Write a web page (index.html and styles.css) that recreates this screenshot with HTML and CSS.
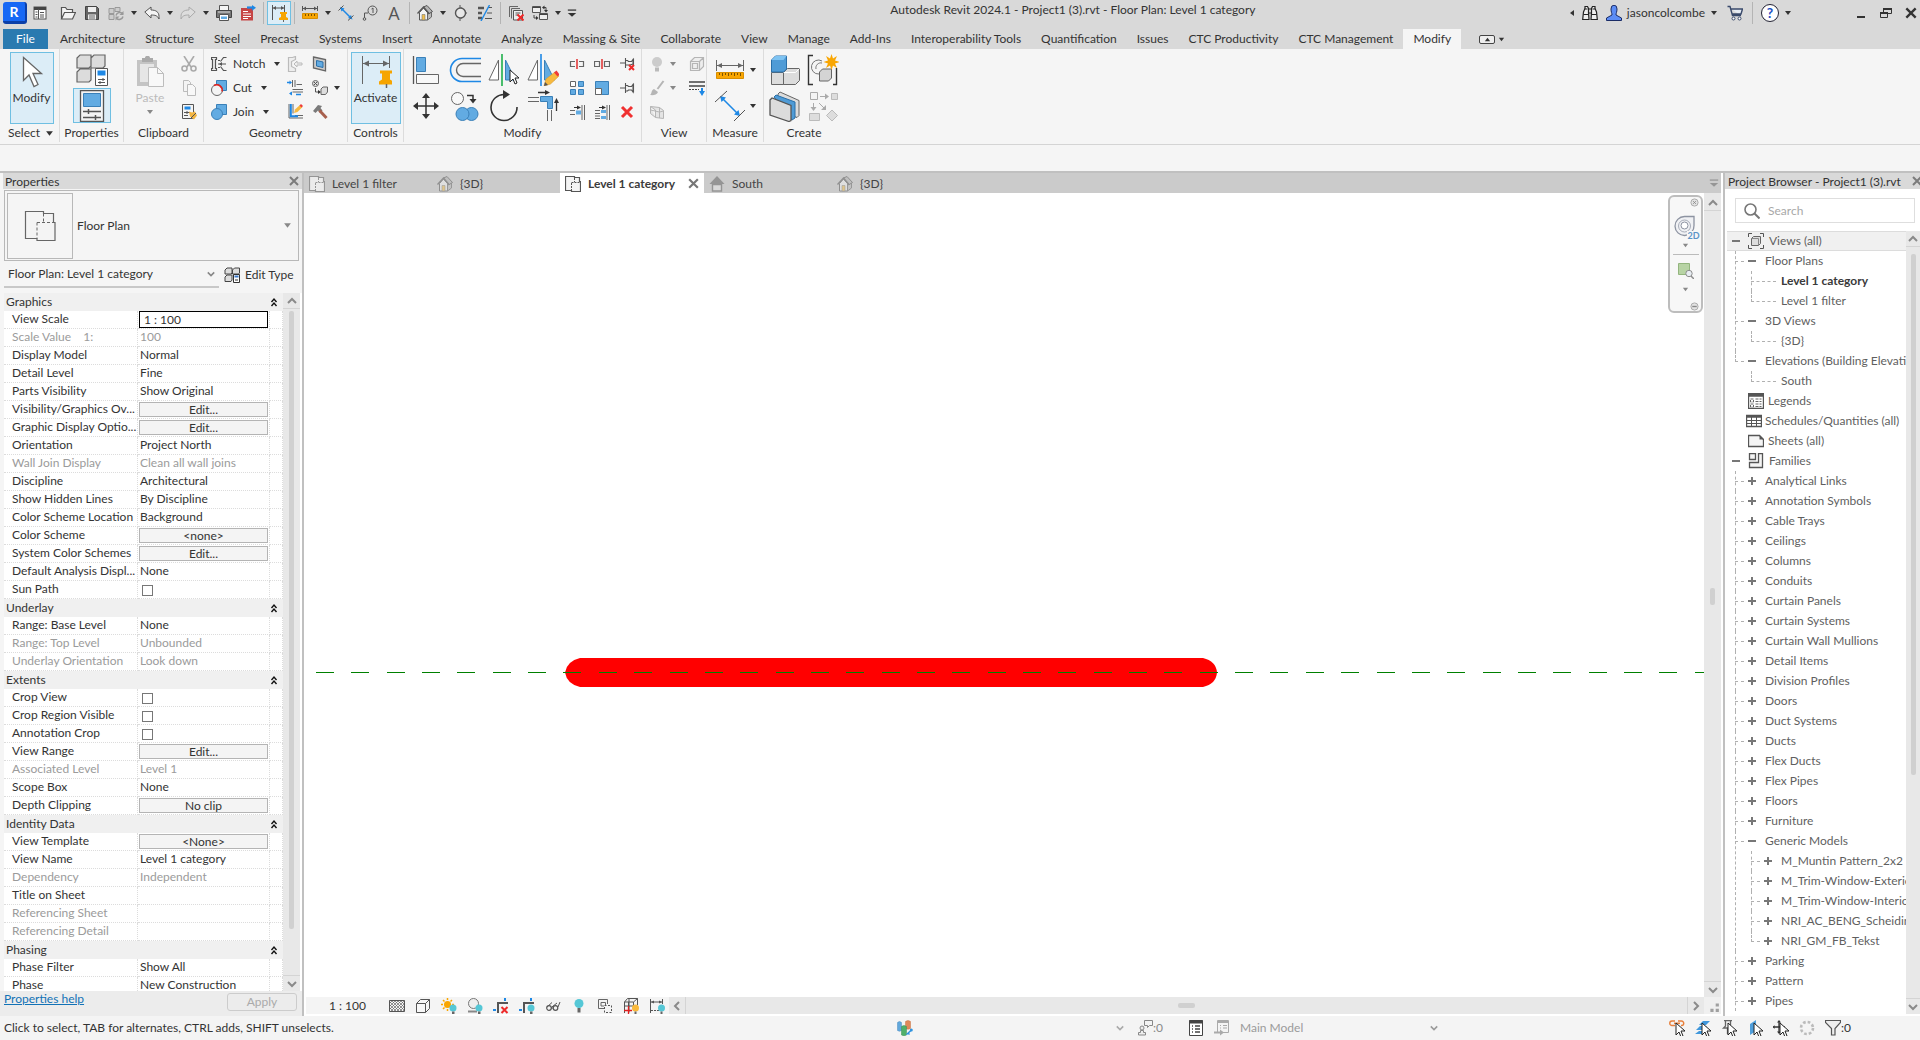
FILE: index.html
```html
<!DOCTYPE html>
<html lang="en">
<head>
<meta charset="utf-8">
<title>Autodesk Revit 2024.1 - Project1 (3).rvt - Floor Plan: Level 1 category</title>
<link rel="stylesheet" href="styles.css">
</head>
<body>
<svg class="sprite" aria-hidden="true">
  <defs>
    <g id="cursor"><path d="M0 0v12l3-3 2 5 2-1-2-5h4z" fill="#fff" stroke="#222" stroke-width="1"/></g>
  </defs>
  <symbol id="caret" viewBox="0 0 8 8"><path d="M1 2h6L4 6z" fill="currentColor"/></symbol>
  <symbol id="chev" viewBox="0 0 10 10"><path d="M1 3l4 4 4-4" fill="none" stroke="currentColor" stroke-width="2"/></symbol>
  <symbol id="close" viewBox="0 0 12 12"><path d="M2 2l8 8M10 2l-8 8" fill="none" stroke="currentColor" stroke-width="2"/></symbol>
  <symbol id="bardown" viewBox="0 0 12 12"><path d="M1 2.500h10" stroke="currentColor" stroke-width="1.500"/><path d="M1 6h10L6 10.500z" fill="currentColor"/></symbol>
  <symbol id="home-tab" viewBox="0 0 16 16"><rect x="2" y="2" width="12" height="12" fill="#fff" stroke="#555"/><path d="M2 3.500h12" stroke="#444" stroke-width="3"/><path d="M6.500 4v10M3.500 7h2M3.500 9.500h2M3.500 12h2M8 7.500h4M8 10h4M8 12h4" stroke="#555" fill="none"/></symbol>
  <symbol id="open" viewBox="0 0 16 16"><path d="M1.500 14V2.500h4l1.500 2h5.500v3M1.500 14l3-6.500h11L12.500 14z" fill="#f4f4f4" stroke="#555" stroke-width="1.200"/></symbol>
  <symbol id="save" viewBox="0 0 16 16"><path d="M1.500 1.500h11l2 2v11h-13z" fill="#666" stroke="#444"/><path d="M4 2h8v5H4zM4 9.500h8v5H4z" fill="#eee"/><path d="M5 11h6M5 13h6" stroke="#666"/></symbol>
  <symbol id="sync" viewBox="0 0 16 16"><path d="M1 3.500h5v5H1zM7 2.500h5v4H7zM1 9.500h5v5H1z" fill="#ccc" stroke="#999"/><path d="M8 10.500a4 4 0 0 1 7-1.500M15 11.500a4 4 0 0 1-6.500 2" fill="none" stroke="#999" stroke-width="1.500"/><path d="M15.500 6v4h-4zM7.500 15.500v-4h4z" fill="#999"/></symbol>
  <symbol id="undo" viewBox="0 0 16 16"><path d="M.800 7L7 2v3c5 0 8 2 8 6.500V14c-1.500-3.500-4-4-8-4v3z" fill="#f4f4f4" stroke="#555"/></symbol>
  <symbol id="redo" viewBox="0 0 16 16"><path d="M15.200 7L9 2v3c-5 0-8 2-8 6.500V14c1.500-3.500 4-4 8-4v3z" fill="#ddd" stroke="#aaa"/></symbol>
  <symbol id="print" viewBox="0 0 16 16"><path d="M3.500.500h9v5h-9z" fill="#f4f4f4" stroke="#555"/><path d="M.500 5.500h15v7H.500z" fill="#777" stroke="#444"/><path d="M2 7h12" stroke="#ddd"/><path d="M3.500 9.500h9v6h-9z" fill="#fff" stroke="#555"/><path d="M5 11.500h6v2.500H5z" fill="#62abe2"/></symbol>
  <symbol id="export" viewBox="0 0 16 16"><path d="M1 3h12v12.500H1z" fill="#c64545"/><path d="M3 6.500h5M3 9h8M3 11.500h8M3 13.500h5" stroke="#fff"/><path d="M7 2.500h6" stroke="#1e88e5" stroke-width="2.200"/><path d="M12 0l4 2.800-4 3z" fill="#1e88e5"/></symbol>
  <symbol id="dimpin16" viewBox="0 0 18 18"><path d="M2.500 1v15M14.500 1v7M3 4h11" stroke="#555" fill="none"/><path d="M3 4l3-2v4zM14 4l-3-2v4z" fill="#555"/><path d="M10 8h7v2h-1v3l2 1v2h-9v-2l2-1v-3h-1z" fill="#f6a500"/><path d="M13.500 16v2" stroke="#666"/></symbol>
  <symbol id="ruler16" viewBox="0 0 16 16"><path d="M.500 1v5M15.500 1v5M1 3.500h14" stroke="#555" fill="none"/><path d="M1 3.500l3-2v4zM15 3.500l-3-2v4z" fill="#555"/><path d="M.500 8.500h15v5H.500z" fill="#f9a602" stroke="#d98f00"/><path d="M3.500 9v2M6.500 9v2M9.500 9v2M12.500 9v2" stroke="#7a5200"/></symbol>
  <symbol id="dim16" viewBox="0 0 16 16"><path d="M4 4l8.500 8.500" stroke="#1e88e5" stroke-width="1.500"/><path d="M2 2l4.500 1.500L3.500 6.500zM14.500 14.500L10 13l3-3z" fill="#1e88e5"/><path d="M.500 5.500l5-5M10 15.500l5.500-5" stroke="#555"/></symbol>
  <symbol id="tag" viewBox="0 0 16 16"><circle cx="10.500" cy="5.500" r="4.500" fill="none" stroke="#555"/><path d="M9.500 4l1.500-1v5M6 8H2.500v5" fill="none" stroke="#555"/><circle cx="2.500" cy="14" r="1.300" fill="none" stroke="#555"/></symbol>
  <symbol id="house" viewBox="0 0 16 16"><path d="M2.500 7.500v7.500h8V7.500L6.500 3z" fill="#f4f4f4" stroke="#555"/><path d="M10.500 15l4-3V6.500L10.500 8z" fill="#bbb" stroke="#666"/><path d="M6.500 2L10 .500 15.500 6.500 11.500 9z" fill="#b4b4b4" stroke="#555"/><path d="M.500 8.500l6-6.500 5.500 6.500" fill="none" stroke="#555" stroke-width="1.300"/><path d="M5 9.500h3V15H5z" fill="#f3c04c" stroke="#777" stroke-width=".6"/></symbol>
  <symbol id="section" viewBox="0 0 16 16"><path d="M7 0v16" stroke="#555"/><path d="M8 2l6 6-6 6z" fill="#555"/><circle cx="7.500" cy="8" r="5" fill="#e8e8e8" stroke="#555" stroke-width="1.400"/></symbol>
  <symbol id="thin" viewBox="0 0 16 16"><path d="M1 3h6M1 8h4M1 13h4" stroke="#555" stroke-width="2.600"/><path d="M11 2.500h4M10 8h5M8 13.500h7" stroke="#555"/><path d="M12.500 0L4 16" stroke="#1e88e5" stroke-width="1.400"/></symbol>
  <symbol id="closeviews" viewBox="0 0 16 16"><path d="M1.500 12V1.500H10M3.500 13.500v-10H12" fill="none" stroke="#666"/><path d="M5.500 5.500h9V15h-9z" fill="#eee" stroke="#555"/><path d="M7.500 8h5M7.500 10h3" stroke="#555"/><path d="M9.500 9.500l6 6M15.500 9.500l-6 6" stroke="#ee2a2a" stroke-width="2"/></symbol>
  <symbol id="switch" viewBox="0 0 16 16"><path d="M.500 1.500h8v6h-8z" fill="#eee" stroke="#555"/><path d="M7.500 8.500h8v6h-8z" fill="#eee" stroke="#555"/><path d="M.500 2.500h8M7.500 9.500h8M11 2.500h3V6M2 10v3h3" fill="none" stroke="#444"/><path d="M10 2.500l2.500-2v4zM12 5h4l-2 2.500zM4 11v4l2.500-2z" fill="#333"/></symbol>
  <symbol id="bino" viewBox="0 0 16 16"><path d="M3 1.500h2.500l1 2V8l.5 6.500H.700L1.500 7 3 3.500zM13 1.500h-2.500l-1 2V8L9 14.500h6.300L14.500 7 13 3.500z" fill="#eee" stroke="#222" stroke-width="1.200"/><path d="M6.500 4h3v4h-3z" fill="#ccc" stroke="#222"/><path d="M1.500 9.500h5M9.500 9.500h5M2.500 4h3M10.500 4h3" stroke="#222"/></symbol>
  <symbol id="user" viewBox="0 0 16 16"><path d="M5 4a3 3.800 0 0 1 6 0c0 3-1 4-1 6l5.500 3v2.500H.500V13L6 10c0-2-1-3-1-6z" fill="#5d8df5" stroke="#1b2c66"/></symbol>
  <symbol id="cart" viewBox="0 0 16 16"><path d="M.500 1.500h2.500l2.500 9h8.500M4 4h11.500l-1.500 5H5.300" fill="#e6ecf4" stroke="#3a4a6b" stroke-width="1.400"/><circle cx="6.500" cy="13.500" r="1.500" fill="#fff" stroke="#3a4a6b"/><circle cx="12.500" cy="13.500" r="1.500" fill="#fff" stroke="#3a4a6b"/></symbol>
  <symbol id="min" viewBox="0 0 12 12"><path d="M2 10h8" stroke="#333" stroke-width="2"/></symbol>
  <symbol id="restore" viewBox="0 0 12 12"><path d="M3.500 5V1.500h8v5H8" fill="none" stroke="#333"/><path d="M3 2h9" stroke="#333" stroke-width="2"/><path d="M.500 5.500h7v5h-7z" fill="none" stroke="#333"/><path d="M0 6h8" stroke="#333" stroke-width="2"/></symbol>

  <symbol id="modify" viewBox="0 0 32 32"><path d="M7.500 1.500v23l5.500-5.500 5 11.500 4-2-5-11h8.500z" fill="#fff" stroke="#666" stroke-width="1.300"/></symbol>
  <symbol id="props1" viewBox="0 0 32 32"><g fill="#dcdcdc" stroke="#666" stroke-width="1.200"><path d="M1 4l3-3h11v11l-2 2H1zM15 4l3-3h11v11l-2 2H15zM1 18l3-3h11v11l-2 2H1z"/></g><path d="M19.500 14.500h12v17h-12z" fill="#fff" stroke="#555"/><path d="M21.500 16.500h8v5h-8z" fill="#1e88e5"/><path d="M22 25.500h7M22 28.500h7M27 24v3M24 27v3" stroke="#555"/></symbol>
  <symbol id="props2" viewBox="0 0 32 32"><path d="M4.500.500h23v31h-23z" fill="#f4f4f4" stroke="#555" stroke-width="1.300"/><path d="M7.500 3.500h17v13h-17z" fill="#62abe2" stroke="#3a80b8"/><path d="M7 21.500h18M7 27.500h18M12.500 19v5M19.500 25v5" stroke="#555" stroke-width="1.500"/></symbol>
  <symbol id="paste" viewBox="0 0 32 32"><path d="M3 4h20v7h-9v19H3z" fill="#c4c4c4"/><path d="M8 2h3c0-3 5-3 5 0h3v4H8z" fill="#aaa"/><path d="M6 8h14v3h-6v15H6z" fill="#e6e6e6"/><path d="M14.500 11.500h9l6 6v13h-15z" fill="#f8f8f8" stroke="#bdbdbd"/><path d="M23.500 11.500v6h6" fill="none" stroke="#bdbdbd"/></symbol>
  <symbol id="cut" viewBox="0 0 16 16"><path d="M3 0l7 11M13 0L6 11" stroke="#aaa" stroke-width="1.600"/><circle cx="3.500" cy="12.500" r="2.500" fill="none" stroke="#aaa" stroke-width="1.600"/><circle cx="12.500" cy="12.500" r="2.500" fill="none" stroke="#aaa" stroke-width="1.600"/></symbol>
  <symbol id="copy" viewBox="0 0 16 16"><path d="M2.500.500h5l2 2v9h-7z" fill="#f4f4f4" stroke="#bbb"/><path d="M6.500 4.500h5l3 3v8h-8z" fill="#f8f8f8" stroke="#bbb"/></symbol>
  <symbol id="match" viewBox="0 0 16 16"><path d="M1.500.500h11v14h-11z" fill="#f4f4f4" stroke="#555"/><path d="M3.500 2.500h6v3h-6z" fill="#1e88e5"/><path d="M3 8.500h6M3 11.500h4M6 7v3" stroke="#555"/><path d="M8 7.500l3 1 3-1 2 4-3 4-4-3z" fill="#f3b541"/><path d="M10 14l5-5" stroke="#555"/></symbol>
  <symbol id="notch" viewBox="0 0 16 16"><path d="M.500 1.500h5v2h-1v9h1v2h-5v-2h1v-9h-1zM7 4.500h2M7 11.500h2M7 8h8M15.500 1.500h-3l-3 4M15.500 14.500h-3l-3-4" fill="#eee" stroke="#555" stroke-width="1.200"/><path d="M8 8l3-2v4z" fill="#555"/></symbol>
  <symbol id="cutg" viewBox="0 0 16 16"><path d="M5.500.500h10v10h-4a6 6 0 0 0-6-6z" fill="#62abe2" stroke="#3a80b8"/><circle cx="6" cy="10" r="5.500" fill="#f4f4f4" stroke="#666"/><path d="M3 5.500a5.500 5.500 0 0 1 8 6" fill="none" stroke="#e02020" stroke-width="1.500"/></symbol>
  <symbol id="joing" viewBox="0 0 16 16"><path d="M5.500.500h10v10h-10z" fill="#62abe2" stroke="#3a80b8"/><circle cx="6" cy="10" r="5.500" fill="#62abe2" stroke="#3a80b8"/></symbol>
  <symbol id="cope" viewBox="0 0 16 16"><path d="M1.500 1.500h4l3-1v3l-4 2v5l4 2v3h-7z" fill="#eee" stroke="#bbb" stroke-width="1.200"/><path d="M7 8l3-3v2h5v2h-5v2z" fill="#eee" stroke="#bbb"/></symbol>
  <symbol id="opening" viewBox="0 0 16 16"><path d="M1.500 1l12 2.500V15l-12-3z" fill="#ccc" stroke="#666" stroke-width="1.300"/><path d="M4.500 4.500l6.500 1.500v5.500l-6.500-1.500z" fill="#62abe2" stroke="#2a6fa8"/></symbol>
  <symbol id="beam" viewBox="0 0 16 16"><path d="M5.500 0v7M8 0v7M5.500 9.500H16M5.500 12H16" stroke="#666"/><path d="M0 2.500h3M14 14.500H9M3 13.500h2" stroke="#1e88e5" stroke-width="1.300"/><path d="M2.500.500l2.500 2-2.500 2zM5 15.500l-3-2 3-2z" fill="#1e88e5"/><path d="M9.500 4.500H15" stroke="#666"/></symbol>
  <symbol id="split" viewBox="0 0 16 16"><circle cx="3.500" cy="3.500" r="3" fill="#ddd" stroke="#666"/><path d="M2 2l3 3M5 2L2 5M3.500 8v4H7" stroke="#555" fill="none"/><path d="M6 10l3 2-3 2z" fill="#333"/><path d="M9 9l2-2h4.500v5l-2 2.500H9z" fill="#ddd" stroke="#666"/></symbol>
  <symbol id="walljoin" viewBox="0 0 16 16"><path d="M2 0v14h14M6 0v9.500M8 11.500h8" fill="none" stroke="#666"/><path d="M3.800 0v12.200H11" fill="none" stroke="#1e88e5" stroke-width="2"/><path d="M7 9l1-3.500L13 1l2.500 2-5 5z" fill="#f7b93f"/><path d="M12.500 1.500L14 0l2 2-1.500 1.500z" fill="#ee3a3a"/></symbol>
  <symbol id="hammer" viewBox="0 0 16 16"><path d="M1 7l5-6 4 1-1.500 2 2 2.500-2.500 2.500L6 6.500 3.500 9z" fill="#7a7a7a"/><path d="M7.500 6.500l7 7.500" stroke="#a8604d" stroke-width="3"/></symbol>
  <symbol id="activate" viewBox="0 0 32 32"><path d="M2.500 0v28M29.500 0v12M3 7.500h26" stroke="#666" fill="none"/><path d="M3 7.500l6-3v6zM29 7.500l-6-3v6z" fill="#666"/><path d="M20 14.500h12v3h-2v6l3 2v3H19v-3l3-2v-6h-2z" fill="#f6a500"/><path d="M26.500 28v4" stroke="#666" stroke-width="1.500"/></symbol>
  <symbol id="align" viewBox="0 0 32 32"><path d="M3.500 2v28" stroke="#555" stroke-width="1.300"/><path d="M6.500 3.500h9v14h-9z" fill="#62abe2" stroke="#3a80b8"/><path d="M6.500 20.500h22v9h-22z" fill="#f8f8f8" stroke="#666"/></symbol>
  <symbol id="offset" viewBox="0 0 32 32"><path d="M32 4.500H13a11.500 11.500 0 0 0 0 23h19" fill="none" stroke="#1e88e5" stroke-width="1.600"/><path d="M32 9.500H14a6.500 6.500 0 0 0 0 13h18" fill="none" stroke="#666" stroke-width="1.400"/></symbol>
  <symbol id="mirrorp" viewBox="0 0 32 32"><path d="M10.500 6v20H1z" fill="#fff" stroke="#666"/><path d="M14 0v32" stroke="#1fb04b" stroke-width="1.600"/><path d="M17.500 6v20h10z" fill="#62abe2" stroke="#3a80b8"/><use href="#cursor" x="22" y="16"/></symbol>
  <symbol id="mirrord" viewBox="0 0 32 32"><path d="M10.500 6v20H1z" fill="#fff" stroke="#666"/><path d="M14 0v32" stroke="#1e88e5" stroke-width="1.600"/><path d="M17.500 6v20h10z" fill="#62abe2" stroke="#3a80b8"/><path d="M17 32l2-7 9-7 4 4-8.500 8z" fill="#f7b93f" stroke="#d99a2b" stroke-width=".6"/><path d="M27 18.500l2.500-2 3 4-2 2z" fill="#ee3a3a"/><path d="M17 32l1-4 3 3z" fill="#555"/></symbol>
  <symbol id="move" viewBox="0 0 32 32"><path d="M16 5v22M5 16h22" stroke="#333" stroke-width="1.500"/><path d="M12 8l4-5 4 5zM12 24l4 5 4-5zM8 12l-5 4 5 4zM24 12l5 4-5 4z" fill="#333"/></symbol>
  <symbol id="copy32" viewBox="0 0 32 32"><circle cx="8.500" cy="8.500" r="6" fill="#f8f8f8" stroke="#666"/><path d="M18 5.500h6V10" fill="none" stroke="#333" stroke-width="1.500"/><path d="M20.500 9h7L24 13.500z" fill="#333"/><circle cx="22.500" cy="24" r="6.500" fill="#62abe2" stroke="#3a80b8"/><circle cx="13.500" cy="24" r="6.500" fill="#62abe2" stroke="#3a80b8"/></symbol>
  <symbol id="rotate" viewBox="0 0 32 32"><path d="M17 4.500A13 13 0 1 0 29 17" fill="none" stroke="#333" stroke-width="1.600"/><path d="M15 0l7 4.500L15 9z" fill="#333"/></symbol>
  <symbol id="trim" viewBox="0 0 32 32"><path d="M1 7.500h11M1 11.500h11M20.500 20v11M24.500 20v11" stroke="#666"/><path d="M13.500 6.500h12v12h-5v-7h-7z" fill="#62abe2" stroke="#3a80b8"/><path d="M11 2.500h8M29.500 21v-9" stroke="#333" stroke-width="1.300"/><path d="M18 0l5 2.500L18 5zM27 13l2.500-5 2.500 5z" fill="#333"/></symbol>
  <symbol id="splitel" viewBox="0 0 16 16"><path d="M6 5.500H1.500v5H6M10 5.500h4.500v5H10" fill="none" stroke="#666" stroke-width="1.200"/><path d="M8 3v10" stroke="#e02020" stroke-width="1.400"/></symbol>
  <symbol id="splitgap" viewBox="0 0 16 16"><path d="M.500 5.500h5v5h-5zM10.500 5.500h5v5h-5z" fill="none" stroke="#666" stroke-width="1.200"/><path d="M8 3v10" stroke="#e02020" stroke-width="1.400"/></symbol>
  <symbol id="pin" viewBox="0 0 16 16"><path d="M1 8h5M6.500 3v10M6.500 5.500h2l1 1h3l1.500-2v7.500l-1.500-2h-3l-1 1h-2M14.500 3.500v9" fill="none" stroke="#555" stroke-width="1.100"/></symbol>
  <symbol id="unpin" viewBox="0 0 16 16"><path d="M1 7h5M6.500 2v10M6.500 4.500h2l1 1h3l1.500-2V8l-3 1h-4M14.500 2.500v7" fill="none" stroke="#555" stroke-width="1.100"/><path d="M10 9l5 5M15 9l-5 5" stroke="#ee2a2a" stroke-width="2"/></symbol>
  <symbol id="array" viewBox="0 0 16 16"><path d="M1.500 1.500h5v5h-5z" fill="#fff" stroke="#666"/><path d="M9.500 1.500h5v5h-5zM1.500 9.500h5v5h-5zM9.500 9.500h5v5h-5z" fill="#62abe2" stroke="#3a80b8"/></symbol>
  <symbol id="scale" viewBox="0 0 16 16"><path d="M1.500 1.500h13v13h-13z" fill="#62abe2" stroke="#3a80b8"/><path d="M1.500 8.500h6v6h-6z" fill="#fff" stroke="#666"/></symbol>
  <symbol id="trim1" viewBox="0 0 16 16"><path d="M1 6.500h5M1 10.500h5M13 1v15M15.500 1v15" stroke="#666"/><path d="M7 6.500h5v4H7z" fill="#62abe2"/><path d="M5 3.500h4" stroke="#333"/><path d="M8 1.500l4 2-4 2z" fill="#333"/></symbol>
  <symbol id="trimm" viewBox="0 0 16 16"><path d="M1 6.500h5M1 9.500h5M1 12h5M1 14.500h5M13 1v15M15.500 1v15" stroke="#666"/><path d="M7 6h5v3H7zM7 12h5v3H7z" fill="#62abe2"/><path d="M5 3.500h4" stroke="#333"/><path d="M8 1.500l4 2-4 2z" fill="#333"/></symbol>
  <symbol id="delete" viewBox="0 0 16 16"><path d="M3 3l10 10M13 3L3 13" stroke="#f03030" stroke-width="3"/></symbol>
  <symbol id="bulbg" viewBox="0 0 16 16"><circle cx="8" cy="6" r="5" fill="#ccc"/><path d="M6 11.500h4v4H6z" fill="#bbb"/></symbol>
  <symbol id="boxg" viewBox="0 0 16 16"><path d="M1.500 5.500l4-4h9v9l-4 4h-9zM1.500 5.500h9v9M10.500 5.500l4-4M3.500 7.500h5v5h-5z" fill="#eee" stroke="#b5b5b5" stroke-width="1.200"/></symbol>
  <symbol id="brush" viewBox="0 0 16 16"><path d="M14.500 1l-6 8" stroke="#b5b5b5" stroke-width="2"/><path d="M1 15c2-1 1-5 4-6l4 3c-1 3-5 3.500-8 3z" fill="#b5b5b5"/></symbol>
  <symbol id="linework" viewBox="0 0 16 16"><path d="M0 2h16M0 6h16" stroke="#444" stroke-width="1.600"/><path d="M0 9.500h10" stroke="#444" stroke-dasharray="2 1"/><path d="M13 8v4" stroke="#1e88e5" stroke-width="2"/><path d="M10 11h6l-3 5z" fill="#1e88e5"/></symbol>
  <symbol id="wireg" viewBox="0 0 16 16"><path d="M1.500 2.500l9 1 4 3v8l-8-1-5-4zM1.500 6l9 2 4-1M6.500 13.500V6l-5-3.500M10.500 3.500V14" fill="#e4e4e4" stroke="#b5b5b5"/></symbol>
  <symbol id="measure" viewBox="0 0 32 32"><path d="M2.500 6v11M29.500 6v11M3 11.500h26" stroke="#666" fill="none"/><path d="M3 11.500l5-2.500v5zM29 11.500l-5-2.500v5z" fill="#666"/><path d="M2.500 18.500h27v6h-27z" fill="#f9a602" stroke="#d98f00"/><path d="M5.500 19v2M8.500 19v3M11.500 19v2M14.500 19v3M17.500 19v2M20.500 19v3M23.500 19v2M26.500 19v3" stroke="#7a5200"/></symbol>
  <symbol id="dim32" viewBox="0 0 32 32"><path d="M8 8l16 16" stroke="#1e88e5" stroke-width="1.600"/><path d="M6 6l6 1.500L7.500 12zM26 26l-6-1.500 4.500-4.500z" fill="#1e88e5"/><path d="M1 12L13 1M20 31l11-11" stroke="#555"/></symbol>
  <symbol id="assembly" viewBox="0 0 32 32"><path d="M2.500 18.500h12v12h-12zM14.500 18.500l4-4h12v12l-4 4h-12z" fill="#dcdcdc" stroke="#666"/><path d="M26.500 18.500l4-4M14.500 18.500h12" stroke="#fff"/><path d="M2.500 6l4-4h11v13l-3 3h-12z" fill="#4f9bd6" stroke="#2a6fa8"/><path d="M2.500 6l4-4h11l-3 4z" fill="#7ec3f2"/></symbol>
  <symbol id="group" viewBox="0 0 32 32"><path d="M6 1.500H1.500v29H6M26 30.500h3.500V14" fill="none" stroke="#333" stroke-width="1.400"/><path d="M15 7a7 7 0 1 0-3 13M15 9a5 5 0 0 0-6 6" fill="none" stroke="#777"/><path d="M12.500 18l3-3h9v9l-3 3h-9z" fill="#d4d4d4" stroke="#666"/><path d="M24.500 0l1.500 4.500 4-2.500-2 4.500 4.500 1.500-4.500 1.500 2 4.500-4-2.500-1.500 4.500-1.500-4.500-4 2.500 2-4.500-4.500-1.500L21 6.500 19 2l4 2.500z" fill="#f9a602"/></symbol>
  <symbol id="parts" viewBox="0 0 32 32"><path d="M9 4l2-2 19 8.500v15l-2 2L9 20z" fill="#dcdcdc" stroke="#666"/><path d="M5 7l2-2 19 7v16l-3 2z" fill="#4f9bd6" stroke="#2a6fa8"/><path d="M1 10l2-2 19 7.500v15l-2 1L1 25z" fill="#dcdcdc" stroke="#555" stroke-width="1.300"/></symbol>
  <symbol id="similar" viewBox="0 0 32 32"><path d="M3.500 2.500h7v7h-7z" fill="#f4f4f4" stroke="#aaa"/><path d="M24.500 3.500h6v6h-6zM2.500 23.500h10v7h-10zM25 20l5.500 5.500L25 31l-5.500-5.500z" fill="#ddd" stroke="#bbb"/><path d="M13 6.500h6M6.500 13v5M12 13l5 5" stroke="#aaa" fill="none"/><path d="M18 3.500l4 3-4 3zM3.500 17h6l-3 4zM19 15v5h-5z" fill="#aaa"/></symbol>

  <symbol id="plan" viewBox="0 0 32 32"><path d="M1.500 1.500h18v2h10v9h1.500v18H13v-2H1.500z" fill="#f4f4f4" stroke="currentColor" stroke-width="1.200"/><path d="M19.500 3.500v9M13 12.500h17M13 12.500v16" stroke="currentColor" stroke-dasharray="3 2" fill="none"/></symbol>
  <symbol id="plan16" viewBox="0 0 16 16"><path d="M.500.500h9v1h5v4h1v10h-9v-1h-6z" fill="#f4f4f4" stroke="currentColor" stroke-width="1.200"/><path d="M9.500 2v4M6.500 6.500h8M6.500 7v7" stroke="currentColor" stroke-dasharray="2 1" fill="none"/></symbol>
  <symbol id="elev" viewBox="0 0 16 16"><path d="M8 0l7.500 8H.500z" fill="#888"/><path d="M3.500 8.500h9v6.500h-9z" fill="#ddd" stroke="#888" stroke-width="1.400"/></symbol>
  <symbol id="edittype" viewBox="0 0 16 16"><path d="M1 3l2-2h5v5L7 7H1zM8.500 3l2-2h5v5l-1 1h-6zM1 10l2-2h5v5l-1 1.500H1z" fill="#ddd" stroke="#444"/><path d="M9.500 7.500h6v8h-6z" fill="#fff" stroke="#333"/><path d="M10.500 8.500h4v2h-4z" fill="#3a78c8"/><path d="M11 13h3" stroke="#333"/></symbol>
  <symbol id="dblup" viewBox="0 0 8 10"><path d="M1.500 5L4 2l2.500 3M1.500 9L4 6l2.500 3" fill="none" stroke="#111" stroke-width="1.400"/></symbol>
  <symbol id="search" viewBox="0 0 16 16"><circle cx="6.500" cy="6.500" r="5.500" fill="none" stroke="#777" stroke-width="1.600"/><path d="M10.500 10.500l5 5" stroke="#777" stroke-width="2"/></symbol>
  <symbol id="views" viewBox="0 0 16 16"><path d="M.500 4V.500H4M12 .500h3.500V4M.500 12v3.500H4M12 15.500h3.500V12" fill="none" stroke="#555"/><path d="M3.500 5.500l2-2h7v7l-2 2h-7z" fill="#ddd" stroke="#666"/><path d="M3.500 5.500h7v7" fill="none" stroke="#888"/></symbol>
  <symbol id="legend" viewBox="0 0 16 16"><path d="M.500.500h15v15H.500z" fill="#fff" stroke="#555" stroke-width="1.400"/><path d="M0 2h16" stroke="#555" stroke-width="3.500"/><path d="M2.500 6h3v3h-3zM2.500 11h3v3h-3zM7.500 6h6M7.500 8.500h6M7.500 11h6M7.500 13.500h6" fill="none" stroke="#666" stroke-dasharray="3 1"/></symbol>
  <symbol id="schedule" viewBox="0 0 16 16"><path d="M.500 2.500h15v11H.500z" fill="#fff" stroke="#555" stroke-width="1.400"/><path d="M0 3.500h16" stroke="#555" stroke-width="2.500"/><path d="M1 7.500h14M1 10.500h14M5.500 4v9M10.500 4v9" stroke="#555"/></symbol>
  <symbol id="sheet" viewBox="0 0 16 16"><path d="M.500 2.500h11l4 4v7H.500z" fill="#f4f4f4" stroke="#555" stroke-width="1.300"/><path d="M11.500 2.500v4h4z" fill="#555"/></symbol>
  <symbol id="families" viewBox="0 0 16 16"><path d="M1.500.500h6v6h-6zM10.500.500h4v14h-13v-5h9z" fill="#f4f4f4" stroke="#555" stroke-width="1.300"/></symbol>

  <symbol id="v-fine" viewBox="0 0 16 16"><pattern id="hatch" width="3" height="3" patternUnits="userSpaceOnUse"><path d="M0 0l3 3M3 0L0 3" stroke="#666" stroke-width=".7"/></pattern><path d="M.500 2.500h15v11H.500z" fill="url(#hatch)" stroke="#555"/></symbol>
  <symbol id="v-style" viewBox="0 0 16 16"><path d="M1.500 5.500l4-4h9v9l-4 4h-9zM1.500 5.500h9v9M10.500 5.500l4-4" fill="#f8f8f8" stroke="#555"/></symbol>
  <symbol id="v-sun" viewBox="0 0 16 16"><circle cx="6.500" cy="6.500" r="3.500" fill="#f9a602"/><path d="M6.500 0v2M6.500 11v2M0 6.500h2M11 6.500h2M2 2l1.500 1.500M11 2L9.500 3.500M2 11l1.500-1.500" stroke="#f9a602" stroke-width="1.500"/><circle cx="12" cy="10" r="3.500" fill="#55c7d6"/><path d="M11 13.500h2.500V16H11z" fill="#666"/></symbol>
  <symbol id="v-shadow" viewBox="0 0 16 16"><circle cx="6.500" cy="5.500" r="5" fill="#eee" stroke="#777"/><path d="M1 13.500h9" stroke="#888" stroke-width="2"/><circle cx="12" cy="10" r="3.500" fill="#55c7d6"/><path d="M11 13.500h2.500V16H11z" fill="#666"/></symbol>
  <symbol id="v-crop" viewBox="0 0 16 16"><path d="M5 15V5h10" fill="none" stroke="#555" stroke-width="2"/><path d="M12 0v3M0 12h3" stroke="#1e88e5" stroke-width="2"/><path d="M8.500 9l6 6M14.500 9l-6 6" stroke="#ee2a2a" stroke-width="2"/></symbol>
  <symbol id="v-cropr" viewBox="0 0 16 16"><path d="M5 15V5h10" fill="none" stroke="#555" stroke-width="2"/><path d="M12 0v3M0 12h3" stroke="#1e88e5" stroke-width="2"/><circle cx="12" cy="10" r="3.500" fill="#55c7d6"/><path d="M11 13.500h2.500V16H11z" fill="#666"/></symbol>
  <symbol id="v-glasses" viewBox="0 0 16 16"><circle cx="4" cy="10" r="2.300" fill="none" stroke="#555" stroke-width="1.200"/><circle cx="10.500" cy="10" r="2.300" fill="none" stroke="#555" stroke-width="1.200"/><path d="M2 9l5-4.500M6.300 9.500L12 5M13 9l2-5M6 10h2" stroke="#555" fill="none"/></symbol>
  <symbol id="v-bulb" viewBox="0 0 16 16"><circle cx="8" cy="5.500" r="4.500" fill="#55c7d6"/><path d="M6.500 10h3v4.500h-3z" fill="#666"/></symbol>
  <symbol id="v-temp" viewBox="0 0 16 16"><path d="M7 10.500H1.500v-9h9V6M4 4.500h4.500V7M4 4.500V8h3" fill="none" stroke="#666"/><path d="M7.500 7.500h7v7h-7z" fill="none" stroke="#555" stroke-dasharray="2 1.500"/></symbol>
  <symbol id="v-analytic" viewBox="0 0 16 16"><path d="M1.500 15V4l3-3.500h10V7M1.500 4h9l4-3.500M5.500 4v11M10.500 4v6M6 .500v14M1.500 8h13" fill="none" stroke="#555"/><path d="M1 12.500h8M5.500 8v8" stroke="#e02020" stroke-width="1.300"/><circle cx="12.500" cy="10" r="3.500" fill="#f9b93c"/><path d="M11.500 13.500h2V16h-2z" fill="#666"/></symbol>
  <symbol id="v-constraint" viewBox="0 0 16 16"><path d="M1.500 1v14M13.500 1v5M2 4h11" fill="none" stroke="#555"/><path d="M2 12.500h8" stroke="#555" stroke-dasharray="2 1"/><path d="M2 4l3-1.500v3zM13 4l-3-1.500v3z" fill="#555"/><circle cx="12.500" cy="10" r="3.500" fill="#55c7d6"/><path d="M11.500 13.500h2V16h-2z" fill="#666"/></symbol>
  <symbol id="grip" viewBox="0 0 16 16"><path d="M11 6h3v3h-3zM11 11h3v3h-3zM6 11h3v3H6z" fill="#a0a0a0"/></symbol>
  <symbol id="wheel" viewBox="0 0 24 24"><path d="M10.500 1.500H20v9a9.500 9.500 0 1 1-9.500-9z" fill="#f0f1f4" stroke="#8d93a1" stroke-width="1.300"/><circle cx="10.500" cy="11" r="6" fill="none" stroke="#a7acb8"/><circle cx="10.500" cy="10.500" r="3.500" fill="#fff" stroke="#8d93a1"/></symbol>
  <symbol id="zoomr" viewBox="0 0 16 16"><path d="M.500.500h11v11H.500z" fill="#b7d3a4" stroke="#93b57e"/><circle cx="11" cy="10.500" r="3.200" fill="#e8edf2" stroke="#8c8c8c"/><path d="M13 13l3 3" stroke="#8c8c8c" stroke-width="1.500"/></symbol>
  <symbol id="ncx" viewBox="0 0 10 10"><circle cx="5" cy="5" r="4" fill="#e3e3e3" stroke="#a5a5a5"/><path d="M3.500 3.500l3 3M6.500 3.500l-3 3" stroke="#888"/></symbol>
  <symbol id="ncm" viewBox="0 0 10 10"><circle cx="5" cy="5" r="4" fill="#e3e3e3" stroke="#a5a5a5"/><path d="M2.500 5h5" stroke="#888" stroke-width="1.500"/></symbol>

  <symbol id="workset" viewBox="0 0 16 16"><path d="M.500 2.500q2-2 4 0v8q-2 1.500-4 0z" fill="#62a8dc" stroke="#4a8cc0" stroke-width=".5"/><path d="M8.500 1.500q2.500-2 5 0v7q-2.500 1.500-5 0z" fill="#e0895a" stroke="#c87445" stroke-width=".5"/><path d="M4.500 6.500q2.500-2 5 0v8.500q-2.500 1.500-5 0z" fill="#4fb06a" stroke="#3a8f53" stroke-width=".5"/><path d="M9.500 14.500l5-4.500M11 13l1.500 1.500" stroke="#2f93e0" stroke-width="1.500"/><circle cx="14.300" cy="10" r="1.500" fill="#2f93e0"/></symbol>
  <symbol id="s-req" viewBox="0 0 16 16"><path d="M7.500.500h8v5h-3l-2 2v-2h-3z" fill="#f4f4f4" stroke="#888"/><circle cx="5" cy="8" r="2" fill="#eee" stroke="#888"/><path d="M3.500 10.500h3v2h2v2.500h-7v-2.500h2z" fill="#eee" stroke="#888"/></symbol>
  <symbol id="s-opt" viewBox="0 0 16 16"><path d="M1.500.500h13v15h-13z" fill="#fff" stroke="#444"/><path d="M1 2h14" stroke="#444" stroke-width="3"/><path d="M4 6h1M7 6h5M4 9h1M7 9h5M4 12h1M7 12h5" stroke="#444" stroke-width="1.300"/></symbol>
  <symbol id="s-add" viewBox="0 0 16 16"><path d="M3.500.500h11v12h-11z" fill="#f4f4f4" stroke="#aaa"/><path d="M3 2h12" stroke="#aaa" stroke-width="2"/><path d="M6 5.500h1M9 5.500h4M6 8h1M9 8h4" stroke="#aaa"/><path d="M0 11.500h6v-2l4 3-4 3v-2H0z" fill="#aaa"/></symbol>
  <symbol id="s-link" viewBox="0 0 16 16"><path d="M6 5.500H3a2.200 2.200 0 0 1 0-4.500h3M9 1h3.500a2.200 2.200 0 0 1 0 4.500H12M5 3.200h6" fill="none" stroke="#e8803c" stroke-width="1.400"/><use href="#cursor" x="7" y="3"/></symbol>
  <symbol id="s-under" viewBox="0 0 16 16"><path d="M4 5l4-4h7l-4 4zM1 10l4-4h7l-4 4zM0 14l4-3h6l-3 3z" fill="#3f97dc"/><use href="#cursor" x="7" y="3"/></symbol>
  <symbol id="s-pin" viewBox="0 0 16 16"><path d="M3 .500h8M4.500 1v5L2.500 8h8M9.500 1v4M6.500 8v6" fill="none" stroke="#666" stroke-width="1.300"/><use href="#cursor" x="7" y="3"/></symbol>
  <symbol id="s-face" viewBox="0 0 16 16"><path d="M3 4l6-4v11l-6 4z" fill="#4f9fdc"/><use href="#cursor" x="7" y="3"/></symbol>
  <symbol id="s-drag" viewBox="0 0 16 16"><path d="M6 1v12M0 7h12" stroke="#333" stroke-width="1.300"/><path d="M4 2.500L6 0l2 2.500zM4 11.500L6 14l2-2.500zM1.500 5L0 7l1.500 2z" fill="#333"/><use href="#cursor" x="7" y="3"/></symbol>
  <symbol id="s-spin" viewBox="0 0 16 16"><circle cx="8" cy="8" r="6" fill="none" stroke="#bbb" stroke-width="2.600" stroke-dasharray="2.700 2"/></symbol>
  <symbol id="s-filter" viewBox="0 0 16 16"><path d="M.500.500h15v2L10 8.500V15H6.500V8.500L.500 2.500z" fill="#eee" stroke="#555" stroke-width="1.200"/></symbol>
</svg>

<div class="app">
  <header class="titlebar">
    <div class="qat">
      <button class="logo" aria-label="Application menu">R</button>
      <button class="qb first" aria-label="Home"><svg><use href="#home-tab"/></svg></button>
      <button class="qb" aria-label="Open"><svg><use href="#open"/></svg></button>
      <button class="qb" aria-label="Save"><svg><use href="#save"/></svg></button>
      <button class="qb" aria-label="Synchronize"><svg><use href="#sync"/></svg></button>
      <button class="qd" aria-label="Synchronize options"><svg><use href="#caret"/></svg></button>
      <button class="qb" aria-label="Undo"><svg><use href="#undo"/></svg></button>
      <button class="qd" aria-label="Undo list"><svg><use href="#caret"/></svg></button>
      <button class="qb" aria-label="Redo"><svg><use href="#redo"/></svg></button>
      <button class="qd" aria-label="Redo list"><svg><use href="#caret"/></svg></button>
      <button class="qb" aria-label="Print"><svg><use href="#print"/></svg></button>
      <button class="qb" aria-label="Export PDF"><svg><use href="#export"/></svg></button>
      <span class="qs"></span>
      <button class="qb on" aria-label="Activate controls"><svg><use href="#dimpin16"/></svg></button>
      <span class="qs"></span>
      <button class="qb" aria-label="Measure"><svg><use href="#ruler16"/></svg></button>
      <button class="qd" aria-label="Measure options"><svg><use href="#caret"/></svg></button>
      <button class="qb" aria-label="Aligned dimension"><svg><use href="#dim16"/></svg></button>
      <button class="qb" aria-label="Tag by category"><svg><use href="#tag"/></svg></button>
      <button class="qb letter" aria-label="Text">A</button>
      <span class="qs"></span>
      <button class="qb" aria-label="Default 3D view"><svg><use href="#house"/></svg></button>
      <button class="qd" aria-label="3D view options"><svg><use href="#caret"/></svg></button>
      <button class="qb" aria-label="Section"><svg><use href="#section"/></svg></button>
      <button class="qb" aria-label="Thin lines"><svg><use href="#thin"/></svg></button>
      <span class="qs"></span>
      <button class="qb" aria-label="Close inactive views"><svg><use href="#closeviews"/></svg></button>
      <button class="qb" aria-label="Switch windows"><svg><use href="#switch"/></svg></button>
      <button class="qd" aria-label="Window list"><svg><use href="#caret"/></svg></button>
      <button class="qd wide" aria-label="Customize toolbar"><svg><use href="#bardown"/></svg></button>
    </div>
    <h1>Autodesk Revit 2024.1 - Project1 (3).rvt - Floor Plan: Level 1 category</h1>
    <div class="account">
      <button class="qd left" aria-label="Collapse search"><svg><use href="#caret"/></svg></button>
      <button class="qb" aria-label="Search help"><svg><use href="#bino"/></svg></button>
      <button class="user"><svg><use href="#user"/></svg>jasoncolcombe<svg class="c"><use href="#caret"/></svg></button>
      <button class="qb" aria-label="App store"><svg><use href="#cart"/></svg></button>
      <span class="qs"></span>
      <button class="qb help" aria-label="Help"><b>?</b></button>
      <button class="qd" aria-label="Help options"><svg><use href="#caret"/></svg></button>
      <div class="winbtns">
        <button class="wb" aria-label="Minimize"><svg><use href="#min"/></svg></button>
        <button class="wb" aria-label="Restore"><svg><use href="#restore"/></svg></button>
        <button class="wb x" aria-label="Close"><svg><use href="#close"/></svg></button>
      </div>
    </div>
  </header>

  <nav class="tabs">
    <button class="file">File</button>
    <button>Architecture</button><button>Structure</button><button>Steel</button><button>Precast</button><button>Systems</button><button>Insert</button><button>Annotate</button><button>Analyze</button><button>Massing &amp; Site</button><button>Collaborate</button><button>View</button><button>Manage</button><button>Add-Ins</button><button>Interoperability Tools</button><button>Quantification</button><button>Issues</button><button>CTC Productivity</button><button>CTC Management</button><button class="current">Modify</button>
    <button class="ribbonmode" aria-label="Minimize ribbon"><i><svg><use href="#caret"/></svg></i><svg><use href="#caret"/></svg></button>
  </nav>

  <section class="ribbon">
    <div class="panel p-select">
      <div class="body"><button class="big on"><svg><use href="#modify"/></svg><span>Modify</span></button></div>
      <h2>Select <svg><use href="#caret"/></svg></h2>
    </div>
    <div class="panel p-props">
      <div class="body stack">
        <button class="ic" aria-label="Type properties"><svg><use href="#props1"/></svg></button>
        <button class="ic on" aria-label="Properties palette"><svg><use href="#props2"/></svg></button>
      </div>
      <h2>Properties</h2>
    </div>
    <div class="panel p-clip">
      <div class="body">
        <button class="big off"><svg><use href="#paste"/></svg><span>Paste</span><svg class="c"><use href="#caret"/></svg></button>
        <div class="col">
          <button class="sm" aria-label="Cut to clipboard"><svg><use href="#cut"/></svg></button>
          <button class="sm" aria-label="Copy to clipboard"><svg><use href="#copy"/></svg></button>
          <button class="sm" aria-label="Match type"><svg><use href="#match"/></svg></button>
        </div>
      </div>
      <h2>Clipboard</h2>
    </div>
    <div class="panel p-geo">
      <div class="body">
        <div class="col text">
          <button class="smt"><svg><use href="#notch"/></svg>Notch<svg class="c"><use href="#caret"/></svg></button>
          <button class="smt"><svg><use href="#cutg"/></svg>Cut<svg class="c"><use href="#caret"/></svg></button>
          <button class="smt"><svg><use href="#joing"/></svg>Join<svg class="c"><use href="#caret"/></svg></button>
        </div>
        <div class="col">
          <button class="sm" aria-label="Cope"><svg><use href="#cope"/></svg></button>
          <button class="sm" aria-label="Beam joins"><svg><use href="#beam"/></svg></button>
          <button class="sm" aria-label="Wall joins"><svg><use href="#walljoin"/></svg></button>
        </div>
        <div class="col">
          <button class="sm" aria-label="Wall opening"><svg><use href="#opening"/></svg></button>
          <button class="sm" aria-label="Split face"><svg><use href="#split"/></svg><svg class="c"><use href="#caret"/></svg></button>
          <button class="sm" aria-label="Demolish"><svg><use href="#hammer"/></svg></button>
        </div>
      </div>
      <h2>Geometry</h2>
    </div>
    <div class="panel p-ctl">
      <div class="body"><button class="big on"><svg><use href="#activate"/></svg><span>Activate</span></button></div>
      <h2>Controls</h2>
    </div>
    <div class="panel p-mod">
      <div class="body">
        <div class="grid8">
          <button class="ic" aria-label="Align"><svg><use href="#align"/></svg></button>
          <button class="ic" aria-label="Offset"><svg><use href="#offset"/></svg></button>
          <button class="ic" aria-label="Mirror, pick axis"><svg><use href="#mirrorp"/></svg></button>
          <button class="ic" aria-label="Mirror, draw axis"><svg><use href="#mirrord"/></svg></button>
          <button class="ic" aria-label="Move"><svg><use href="#move"/></svg></button>
          <button class="ic" aria-label="Copy"><svg><use href="#copy32"/></svg></button>
          <button class="ic" aria-label="Rotate"><svg><use href="#rotate"/></svg></button>
          <button class="ic" aria-label="Trim to corner"><svg><use href="#trim"/></svg></button>
        </div>
        <div class="col">
          <button class="sm" aria-label="Split element"><svg><use href="#splitel"/></svg></button>
          <button class="sm" aria-label="Array"><svg><use href="#array"/></svg></button>
          <button class="sm" aria-label="Trim single"><svg><use href="#trim1"/></svg></button>
        </div>
        <div class="col">
          <button class="sm" aria-label="Split with gap"><svg><use href="#splitgap"/></svg></button>
          <button class="sm" aria-label="Scale"><svg><use href="#scale"/></svg></button>
          <button class="sm" aria-label="Trim multiple"><svg><use href="#trimm"/></svg></button>
        </div>
        <div class="col">
          <button class="sm" aria-label="Unpin"><svg><use href="#unpin"/></svg></button>
          <button class="sm" aria-label="Pin"><svg><use href="#pin"/></svg></button>
          <button class="sm" aria-label="Delete"><svg><use href="#delete"/></svg></button>
        </div>
      </div>
      <h2>Modify</h2>
    </div>
    <div class="panel p-view">
      <div class="body">
        <div class="col">
          <button class="sm g" aria-label="Hide in view"><svg><use href="#bulbg"/></svg><svg class="c"><use href="#caret"/></svg></button>
          <button class="sm g" aria-label="Override graphics"><svg><use href="#brush"/></svg><svg class="c"><use href="#caret"/></svg></button>
          <button class="sm" aria-label="Selection box"><svg><use href="#wireg"/></svg></button>
        </div>
        <div class="col">
          <button class="sm" aria-label="Displace elements"><svg><use href="#boxg"/></svg></button>
          <button class="sm" aria-label="Linework"><svg><use href="#linework"/></svg></button>
        </div>
      </div>
      <h2>View</h2>
    </div>
    <div class="panel p-meas">
      <div class="body stack">
        <button class="ic" aria-label="Measure between"><svg><use href="#measure"/></svg><svg class="c"><use href="#caret"/></svg></button>
        <button class="ic" aria-label="Dimension"><svg><use href="#dim32"/></svg><svg class="c"><use href="#caret"/></svg></button>
      </div>
      <h2>Measure</h2>
    </div>
    <div class="panel p-create">
      <div class="body">
        <div class="grid4">
          <button class="ic" aria-label="Create assembly"><svg><use href="#assembly"/></svg></button>
          <button class="ic" aria-label="Create group"><svg><use href="#group"/></svg></button>
          <button class="ic" aria-label="Create parts"><svg><use href="#parts"/></svg></button>
          <button class="ic" aria-label="Create similar"><svg><use href="#similar"/></svg></button>
        </div>
      </div>
      <h2>Create</h2>
    </div>
  </section>
  <div class="optionsbar"></div>

  <main class="work">
    <aside class="properties">
      <header class="palhead"><h2>Properties</h2><button aria-label="Close properties"><svg><use href="#close"/></svg></button></header>
      <button class="typesel"><span class="thumb"><svg><use href="#plan"/></svg></span><span class="tname">Floor Plan</span><svg class="c"><use href="#caret"/></svg></button>
      <div class="filter">
        <button class="inst">Floor Plan: Level 1 category<svg><use href="#chev"/></svg></button>
        <button class="edittype"><svg><use href="#edittype"/></svg>Edit Type</button>
      </div>
      <div class="gridwrap">
        <div class="gridclip">
        <table class="props">
          <colgroup><col class="c1"><col class="c2"><col class="c3"></colgroup>
          <tbody>
          <tr class="sec"><th colspan="2">Graphics</th><td><svg><use href="#dblup"/></svg></td></tr>
          <tr><th><label for="vscale">View Scale</label></th><td class="edit"><input id="vscale" value="1 : 100"></td><td></td></tr>
          <tr class="dis"><th>Scale Value &nbsp;&nbsp; 1:</th><td>100</td><td></td></tr>
          <tr><th>Display Model</th><td>Normal</td><td></td></tr>
          <tr><th>Detail Level</th><td>Fine</td><td></td></tr>
          <tr><th>Parts Visibility</th><td>Show Original</td><td></td></tr>
          <tr><th>Visibility/Graphics Ov...</th><td class="b"><button>Edit...</button></td><td></td></tr>
          <tr><th>Graphic Display Optio...</th><td class="b"><button>Edit...</button></td><td></td></tr>
          <tr><th>Orientation</th><td>Project North</td><td></td></tr>
          <tr class="dis"><th>Wall Join Display</th><td>Clean all wall joins</td><td></td></tr>
          <tr><th>Discipline</th><td>Architectural</td><td></td></tr>
          <tr><th>Show Hidden Lines</th><td>By Discipline</td><td></td></tr>
          <tr><th>Color Scheme Location</th><td>Background</td><td></td></tr>
          <tr><th>Color Scheme</th><td class="b"><button>&lt;none&gt;</button></td><td></td></tr>
          <tr><th>System Color Schemes</th><td class="b"><button>Edit...</button></td><td></td></tr>
          <tr><th>Default Analysis Displ...</th><td>None</td><td></td></tr>
          <tr><th><label for="sun">Sun Path</label></th><td class="k"><input type="checkbox" id="sun"></td><td></td></tr>
          <tr class="sec"><th colspan="2">Underlay</th><td><svg><use href="#dblup"/></svg></td></tr>
          <tr><th>Range: Base Level</th><td>None</td><td></td></tr>
          <tr class="dis"><th>Range: Top Level</th><td>Unbounded</td><td></td></tr>
          <tr class="dis"><th>Underlay Orientation</th><td>Look down</td><td></td></tr>
          <tr class="sec"><th colspan="2">Extents</th><td><svg><use href="#dblup"/></svg></td></tr>
          <tr><th><label for="cropv">Crop View</label></th><td class="k"><input type="checkbox" id="cropv"></td><td></td></tr>
          <tr><th><label for="cropr">Crop Region Visible</label></th><td class="k"><input type="checkbox" id="cropr"></td><td></td></tr>
          <tr><th><label for="cropa">Annotation Crop</label></th><td class="k"><input type="checkbox" id="cropa"></td><td></td></tr>
          <tr><th>View Range</th><td class="b"><button>Edit...</button></td><td></td></tr>
          <tr class="dis"><th>Associated Level</th><td>Level 1</td><td></td></tr>
          <tr><th>Scope Box</th><td>None</td><td></td></tr>
          <tr><th>Depth Clipping</th><td class="b"><button>No clip</button></td><td></td></tr>
          <tr class="sec"><th colspan="2">Identity Data</th><td><svg><use href="#dblup"/></svg></td></tr>
          <tr><th>View Template</th><td class="b"><button>&lt;None&gt;</button></td><td></td></tr>
          <tr><th>View Name</th><td>Level 1 category</td><td></td></tr>
          <tr class="dis"><th>Dependency</th><td>Independent</td><td></td></tr>
          <tr><th>Title on Sheet</th><td></td><td></td></tr>
          <tr class="dis"><th>Referencing Sheet</th><td></td><td></td></tr>
          <tr class="dis"><th>Referencing Detail</th><td></td><td></td></tr>
          <tr class="sec"><th colspan="2">Phasing</th><td><svg><use href="#dblup"/></svg></td></tr>
          <tr><th>Phase Filter</th><td>Show All</td><td></td></tr>
          <tr><th>Phase</th><td>New Construction</td><td></td></tr>
          </tbody>
        </table>
        </div>
        <div class="vbar p"><button class="up" aria-label="Scroll up"><svg><use href="#chev"/></svg></button><div class="track"><i></i></div><button aria-label="Scroll down"><svg><use href="#chev"/></svg></button></div>
      </div>
      <footer class="palfoot"><a href="#help">Properties help</a><button disabled>Apply</button></footer>
    </aside>

    <section class="view">
      <nav class="doctabs">
        <button><svg><use href="#plan16"/></svg>Level 1 filter</button>
        <button><svg class="dim"><use href="#house"/></svg>{3D}</button>
        <button class="current"><svg><use href="#plan16"/></svg>Level 1 category<svg class="x"><use href="#close"/></svg></button>
        <button><svg><use href="#elev"/></svg>South</button>
        <button><svg class="dim"><use href="#house"/></svg>{3D}</button>
        <button class="list" aria-label="Open views"><svg><use href="#bardown"/></svg></button>
      </nav>
      <div class="stage">
        <div class="canvas">
          <svg class="drawing" aria-label="Wall on level 1">
            <path d="M276 465H899Q912 468 913 479.500Q912 491 899 494H276Q263 491 261 479.500Q263 468 276 465z" fill="#f00"/>
            <path d="M12 479.500H4000" stroke="#008000" stroke-dasharray="18 17.350" shape-rendering="crispEdges"/>
          </svg>
          <div class="navbar">
            <button class="n1" aria-label="Close navigation bar"><svg><use href="#ncx"/></svg></button>
            <button class="n2" aria-label="Steering wheel"><svg><use href="#wheel"/></svg><b>2D</b></button>
            <button class="n3" aria-label="Wheel options"><svg><use href="#caret"/></svg></button>
            <hr>
            <button class="n4" aria-label="Zoom region"><svg><use href="#zoomr"/></svg></button>
            <button class="n3" aria-label="Zoom options"><svg><use href="#caret"/></svg></button>
            <button class="n1 end" aria-label="Navigation bar options"><svg><use href="#ncm"/></svg></button>
          </div>
        </div>
        <div class="vbar v"><button class="up" aria-label="Scroll up"><svg><use href="#chev"/></svg></button><div class="track"><i></i></div><button aria-label="Scroll down"><svg><use href="#chev"/></svg></button></div>
      </div>
      <div class="viewbar">
        <button class="vs">1 : 100</button>
        <div class="vic">
          <button aria-label="Detail level"><svg><use href="#v-fine"/></svg></button>
          <button aria-label="Visual style"><svg><use href="#v-style"/></svg></button>
          <button aria-label="Sun path"><svg><use href="#v-sun"/></svg></button>
          <button aria-label="Shadows"><svg><use href="#v-shadow"/></svg></button>
          <button aria-label="Crop view"><svg><use href="#v-crop"/></svg></button>
          <button aria-label="Show crop region"><svg><use href="#v-cropr"/></svg></button>
          <button aria-label="Temporary hide"><svg><use href="#v-glasses"/></svg></button>
          <button aria-label="Reveal hidden"><svg><use href="#v-bulb"/></svg></button>
          <button aria-label="Temporary view properties"><svg><use href="#v-temp"/></svg></button>
          <button aria-label="Analytical model"><svg><use href="#v-analytic"/></svg></button>
          <button aria-label="Reveal constraints"><svg><use href="#v-constraint"/></svg></button>
        </div>
        <div class="hbar"><button class="l" aria-label="Scroll left"><svg><use href="#chev"/></svg></button><div class="track"><i></i></div><button class="r" aria-label="Scroll right"><svg><use href="#chev"/></svg></button></div>
        <svg class="grip"><use href="#grip"/></svg>
      </div>
    </section>

    <aside class="browser">
      <header class="palhead"><h2>Project Browser - Project1 (3).rvt</h2><button aria-label="Close browser"><svg><use href="#close"/></svg></button></header>
      <label class="search"><svg><use href="#search"/></svg><input type="text" placeholder="Search" aria-label="Search"></label>
      <div class="treewrap">
        <ul class="tree">
          <li class="root"><div class="row sel"><i class="m"></i><svg><use href="#views"/></svg>Views (all)</div>
            <ul>
              <li><div class="row"><i class="m"></i>Floor Plans</div>
                <ul><li class="leaf"><div class="row"><b>Level 1 category</b></div></li><li class="leaf"><div class="row">Level 1 filter</div></li></ul></li>
              <li><div class="row"><i class="m"></i>3D Views</div>
                <ul><li class="leaf"><div class="row">{3D}</div></li></ul></li>
              <li><div class="row"><i class="m"></i>Elevations (Building Elevation)</div>
                <ul><li class="leaf"><div class="row">South</div></li></ul></li>
            </ul></li>
          <li class="root"><div class="row solo"><svg><use href="#legend"/></svg>Legends</div></li>
          <li class="root"><div class="row solo wide"><svg><use href="#schedule"/></svg>Schedules/Quantities (all)</div></li>
          <li class="root"><div class="row solo"><svg><use href="#sheet"/></svg>Sheets (all)</div></li>
          <li class="root"><div class="row"><i class="m"></i><svg><use href="#families"/></svg>Families</div>
            <ul class="open">
              <li><div class="row"><i></i>Analytical Links</div></li>
              <li><div class="row"><i></i>Annotation Symbols</div></li>
              <li><div class="row"><i></i>Cable Trays</div></li>
              <li><div class="row"><i></i>Ceilings</div></li>
              <li><div class="row"><i></i>Columns</div></li>
              <li><div class="row"><i></i>Conduits</div></li>
              <li><div class="row"><i></i>Curtain Panels</div></li>
              <li><div class="row"><i></i>Curtain Systems</div></li>
              <li><div class="row"><i></i>Curtain Wall Mullions</div></li>
              <li><div class="row"><i></i>Detail Items</div></li>
              <li><div class="row"><i></i>Division Profiles</div></li>
              <li><div class="row"><i></i>Doors</div></li>
              <li><div class="row"><i></i>Duct Systems</div></li>
              <li><div class="row"><i></i>Ducts</div></li>
              <li><div class="row"><i></i>Flex Ducts</div></li>
              <li><div class="row"><i></i>Flex Pipes</div></li>
              <li><div class="row"><i></i>Floors</div></li>
              <li><div class="row"><i></i>Furniture</div></li>
              <li><div class="row"><i class="m"></i>Generic Models</div>
                <ul>
                  <li><div class="row"><i></i>M_Muntin Pattern_2x2</div></li>
                  <li><div class="row"><i></i>M_Trim-Window-Exterior-Flat</div></li>
                  <li><div class="row"><i></i>M_Trim-Window-Interior-Flat</div></li>
                  <li><div class="row"><i></i>NRI_AC_BENG_Scheidingswand</div></li>
                  <li><div class="row"><i></i>NRI_GM_FB_Tekst</div></li>
                </ul></li>
              <li><div class="row"><i></i>Parking</div></li>
              <li><div class="row"><i></i>Pattern</div></li>
              <li><div class="row"><i></i>Pipes</div></li>
            </ul></li>
        </ul>
        <div class="vbar b"><button class="up" aria-label="Scroll up"><svg><use href="#chev"/></svg></button><div class="track"><i></i></div><button aria-label="Scroll down"><svg><use href="#chev"/></svg></button></div>
      </div>
    </aside>
  </main>

  <footer class="status">
    <span class="msg">Click to select, TAB for alternates, CTRL adds, SHIFT unselects.</span>
    <button class="workset" aria-label="Worksets"><svg><use href="#workset"/></svg></button>
    <svg class="c"><use href="#chev"/></svg>
    <span class="req"><svg><use href="#s-req"/></svg>:0</span>
    <button aria-label="Design options"><svg><use href="#s-opt"/></svg></button>
    <button aria-label="Add to set"><svg><use href="#s-add"/></svg></button>
    <button class="mm">Main Model<svg class="c"><use href="#chev"/></svg></button>
    <div class="selopts">
      <button aria-label="Select links"><svg><use href="#s-link"/></svg></button>
      <button aria-label="Select underlay elements"><svg><use href="#s-under"/></svg></button>
      <button aria-label="Select pinned elements"><svg><use href="#s-pin"/></svg></button>
      <button aria-label="Select elements by face"><svg><use href="#s-face"/></svg></button>
      <button aria-label="Drag elements on selection"><svg><use href="#s-drag"/></svg></button>
      <button aria-label="Background processes"><svg><use href="#s-spin"/></svg></button>
      <button class="flt"><svg><use href="#s-filter"/></svg>:0</button>
    </div>
  </footer>
</div>
</body>
</html>
```
FILE: styles.css
```css
* { box-sizing: border-box; }
html, body { height: 100%; overflow: hidden; }
body {
  margin: 0;
  font: 12px/16px Lato, "Open Sans", sans-serif;
  color: #333;
}
h1, h2 { margin: 0; font: inherit; }
button {
  margin: 0; padding: 0; border: 0; background: none;
  font: inherit; color: inherit;
  display: flex; align-items: center; justify-content: center;
  flex: none; white-space: nowrap;
}
svg { width: 16px; height: 16px; flex: none; display: block; }
svg.c { width: 8px; height: 8px; }
.sprite { position: absolute; width: 0; height: 0; }

.app { height: 100vh; overflow: hidden; display: flex; flex-direction: column; background: #f5f5f5; }

/* title bar */
.titlebar { height: 29px; flex: none; background: #d9d9d9; display: flex; padding-left: 3px; }
.qat { display: flex; height: 26px; align-items: center; }
.logo { width: 24px; height: 22px; background: #1768f5; border-bottom: 3px solid #0b3fa8; border-right: 2px solid #0b3fa8; border-radius: 3px; color: #fff; font-weight: 700; font-size: 14px; }
.qb { width: 24px; height: 24px; }
.qb.first { margin: 0 4px 0 1px; }
.qb.on { background: #dcedf7; border: 1px solid #6fbfe2; }
.qb.on svg { width: 18px; height: 18px; }
.qb.letter { font: 18px/20px "Open Sans", sans-serif; color: #555; }
.qd { width: 12px; height: 24px; }
.qd svg { width: 8px; height: 8px; }
.qd.wide { width: 16px; }
.qd.wide svg { width: 10px; height: 10px; }
.qd.left svg { transform: rotate(90deg); }
.qs { width: 1px; height: 22px; margin: 0 3px; background: #b4b4b4; }
.titlebar h1 { flex: 1; text-align: center; line-height: 20px; }
.account { display: flex; height: 26px; align-items: center; padding-right: 2px; }
.account .qs { margin: 0 5px; }
.user { height: 24px; padding: 0 5px 0 4px; gap: 5px; }
.help b { width: 18px; height: 18px; border: 1px solid #223; border-radius: 9px; background: #fff; color: #1d4fc4; font-size: 14px; line-height: 16px; }
.winbtns { display: flex; gap: 11px; margin-left: 60px; }
.wb { width: 14px; height: 20px; }
.wb svg { width: 12px; height: 12px; }
.wb.x svg { width: 14px; height: 14px; }

/* ribbon tabs */
.tabs { height: 20px; flex: none; display: flex; background: #d9d9d9; padding-left: 3px; }
.tabs button { padding: 0 10px; line-height: 20px; }
.tabs .file { width: 45px; background: #2a7ab0; color: #fff; margin-right: 2px; }
.tabs .current { background: #f5f5f5; }
.tabs .ribbonmode { padding: 0; margin-left: 18px; gap: 3px; }
.ribbonmode i { width: 16px; height: 9px; border: 1px solid #444; border-radius: 2px; background: #eee; display: flex; align-items: center; justify-content: center; }
.ribbonmode i svg { transform: rotate(180deg); }
.ribbonmode svg { width: 7px; height: 7px; }

/* ribbon */
.ribbon { height: 96px; flex: none; display: flex; padding-left: 3px; border-bottom: 1px solid #d4d4d4; }
.panel { display: flex; flex-direction: column; border-right: 1px solid #dcdcdc; margin-bottom: 2px; flex: none; }
.panel:last-child { border-right: 0; }
.panel h2 { line-height: 18px; display: flex; justify-content: center; align-items: center; gap: 5px; }
.panel h2 svg { width: 9px; height: 9px; }
.body { height: 77px; display: flex; justify-content: center; padding-top: 3px; }
.big { height: 72px; flex-direction: column; justify-content: flex-start; border: 1px solid transparent; padding-top: 3px; }
.big svg { width: 32px; height: 32px; }
.big span { line-height: 20px; }
.big svg.c { width: 8px; height: 8px; }
.big.on, .ic.on { background: #dcedf7; border: 1px solid #6fbfe2; }
.big.off { color: #bbb; }
.off svg.c { color: #888; }
.stack { flex-direction: column; align-items: center; gap: 1px; justify-content: flex-start; }
.ic { width: 38px; height: 35px; }
.ic svg { width: 32px; height: 32px; }
.ic svg.c { width: 8px; height: 8px; }
.col { display: flex; flex-direction: column; }
.sm { height: 24px; width: 24px; }
.smt { height: 24px; justify-content: flex-start; gap: 6px; }
.smt svg.c { margin-left: 2px; }
.p-select { width: 57px; }
.p-select .big { width: 44px; }
.p-select .body { padding-left: 1px; }
.p-props { width: 64px; }
.p-clip { width: 80px; }
.p-clip .body { justify-content: flex-start; padding-left: 6px; }
.p-clip .big { width: 40px; margin-right: 7px; }
.p-geo { width: 144px; }
.p-geo .body { justify-content: flex-start; padding-left: 7px; }
.p-geo .text { width: 72px; }
.p-geo .sm { width: 25px; justify-content: flex-start; gap: 5px; padding-left: 4px; }
.p-ctl { width: 56px; }
.p-ctl .big { width: 50px; }
.p-mod { width: 238px; }
.p-mod .body { justify-content: flex-start; padding-left: 3px; }
.grid8 { display: grid; grid-template-columns: repeat(4, 39px); grid-template-rows: 36px 36px; margin-right: 2px; }
.p-mod .col + .col { margin-left: 1px; }
.p-view { width: 65px; }
.p-view .body { justify-content: flex-start; padding-left: 7px; gap: 8px; }
.p-view .sm { justify-content: flex-start; }
.p-view .g { width: 32px; color: #888; gap: 4px; }
.p-meas { width: 57px; }
.p-meas .ic { width: 50px; gap: 3px; }
.p-create { width: 80px; }
.grid4 { display: grid; grid-template-columns: 38px 38px; grid-template-rows: 36px 36px; }
.optionsbar { height: 26px; flex: none; }

/* work area */
.work { flex: 1; min-height: 0; display: flex; border-top: 2px solid #c0c0c0; }
.palhead { height: 16px; flex: none; background: #d9d9d9; display: flex; justify-content: space-between; padding-left: 2px; overflow: hidden; }
.palhead h2 { line-height: 18px; white-space: nowrap; }
.palhead button { color: #7c7c7c; }
.palhead svg { width: 12px; height: 12px; }

.properties { width: 304px; flex: none; display: flex; flex-direction: column; border-right: 2px solid #c0c0c0; padding-left: 4px; background: #f5f5f5; }
.properties .palhead { margin-left: -1px; padding-right: 2px; }
.typesel { height: 71px; margin: 1px 3px 0 0; border: 1px solid #b8b8b8; padding: 0 6px 0 2px; justify-content: flex-start; }
.thumb { width: 66px; height: 66px; border: 1px solid #b8b8b8; display: flex; align-items: center; justify-content: center; color: #666; }
.thumb svg { width: 32px; height: 32px; }
.tname { flex: 1; text-align: left; padding-left: 4px; }
.typesel .c { color: #888; width: 9px; height: 9px; }
.filter { height: 32px; display: flex; align-items: flex-start; gap: 5px; flex: none; }
.inst { width: 215px; height: 27px; border-bottom: 2px solid #c8c8c8; justify-content: space-between; padding: 0 4px; }
.inst svg { width: 8px; height: 8px; color: #888; }
.edittype { height: 27px; gap: 5px; }
.gridwrap { flex: 1; min-height: 0; display: flex; background: #fff; padding-right: 2px; }
.gridclip { flex: 1; min-width: 0; overflow: hidden; }
.props { width: 100%; border-collapse: separate; border-spacing: 0; table-layout: fixed; }
.c1 { width: 134px; } .c3 { width: 13px; }
.props tr { height: 18px; }
.props th, .props td { padding: 0 0 0 2px; height: 18px; font-weight: 400; text-align: left; vertical-align: top; line-height: 16px; white-space: nowrap; overflow: hidden; border-bottom: 1px dotted #dcdcdc; border-right: 1px dotted #dcdcdc; }
.props th { padding-left: 8px; }
.props td.edit, .props td.b, .props td.k { padding: 0 1px; }
.props .dis th, .props .dis td { color: #9b9b9b; }
.props .sec th, .props .sec td { background: #f0f0f0; border: 0; padding: 0; vertical-align: middle; }
.props .sec th { padding-left: 2px; }
.sec svg { width: 8px; height: 10px; }
.props input:not([type]) { width: 100%; height: 17px; border: 1px solid #000; font: inherit; color: inherit; padding: 0 4px; display: block; background: #fff; outline: 0; }
.props .b button { width: 100%; height: 15px; margin-top: 1px; border: 1px solid #b4b4b4; background: #f4f4f4; line-height: 13px; }
.props input[type=checkbox] { appearance: none; width: 11px; height: 11px; border: 1px solid #777; background: #fff; margin: 4px 0 0 3px; display: block; }
.palfoot { height: 25px; flex: none; display: flex; justify-content: space-between; background: #ececec; margin-left: -4px; padding: 0 5px 0 4px; }
.palfoot a { color: #1272b6; line-height: 15px; }
.palfoot button { width: 70px; height: 18px; margin-top: 2px; border: 1px solid #ccc; border-radius: 3px; color: #aaa; }

/* scroll bars */
.vbar { width: 17px; flex: none; background: #e8e8e8; display: flex; flex-direction: column; align-items: stretch; }
.vbar button { height: 16px; color: #8a8a8a; border-top: 1px solid #d4d4d4; }
.vbar button.up { border-top: 0; border-bottom: 1px solid #d4d4d4; }
.up svg { transform: rotate(180deg); }
.vbar svg, .hbar svg { width: 10px; height: 10px; }
.track { flex: 1; display: flex; }
.track i { background: #d0d0d0; border-radius: 2px; }
.vbar .track { flex-direction: column; align-items: center; }
.vbar .track i { width: 5px; }
.p .track { padding-top: 2px; }
.p .track i { height: 93%; }
.v .track { justify-content: center; }
.v .track i { height: 17px; }
.b .track { padding-top: 7px; }
.b .track i { height: 70%; }

/* drawing views */
.view { flex: 1; min-width: 0; display: flex; flex-direction: column; background: #fff; padding-right: 2px; }
.doctabs { height: 20px; flex: none; display: flex; background: #cbcbcb; }
.doctabs button { width: 128px; justify-content: flex-start; gap: 7px; padding: 1px 0 0 5px; color: #444; }
.doctabs button > svg:first-child { color: #888; opacity: .8; }
.doctabs .current { width: 144px; background: #fff; font-weight: 700; color: #3c3c3c; }
.doctabs button.current > svg:first-child { color: #555; opacity: 1; }
.doctabs .x { width: 13px; height: 13px; color: #777; margin-left: auto; margin-right: 4px; }
.doctabs .list { width: 12px; margin-left: auto; padding: 0; }
.doctabs .list svg { width: 10px; height: 10px; }
.doctabs svg.dim:first-child { opacity: .5; }
.stage { flex: 1; min-height: 0; display: flex; }
.canvas { flex: 1; position: relative; overflow: hidden; }
.drawing { position: absolute; left: 0; top: 0; width: 100%; height: 100%; }
.navbar { position: absolute; right: 1px; top: 2px; width: 35px; height: 118px; border: 2px solid #bdbdbd; border-radius: 6px; background: #f7f7f7; display: flex; flex-direction: column; align-items: center; }
.navbar button { color: #888; }
.n1 { align-self: flex-end; margin-right: 2px; height: 10px; }
.n1 svg { width: 9px; height: 9px; }
.n1.end { margin-top: auto; }
.n2 { position: relative; margin-top: 8px; }
.n2 svg { width: 24px; height: 24px; }
.n2 b { position: absolute; right: -2px; bottom: -1px; font-size: 9px; line-height: 9px; color: #5b94c6; background: #f7f7f7; }
.n3 { height: 12px; }
.n3 svg { width: 7px; height: 7px; }
.navbar hr { width: 26px; margin: 3px 0 8px; border: 0; border-top: 1px solid #bbb; }
.n4 { margin-bottom: 4px; }
.v { padding-top: 2px; }
.viewbar { height: 17px; margin: 0 0 2px 2px; flex: none; display: flex; background: #f4f4f4; }
.vs { width: 83px; }
.vic { display: flex; flex: none; }
.vic button { width: 26px; justify-content: flex-start; }
.vic button:last-child { width: 20px; }
.hbar { flex: 1; display: flex; background: #e8e8e8; }
.hbar button { width: 17px; color: #8a8a8a; border-left: 1px solid #d4d4d4; }
.hbar .l { border: 0; border-right: 1px solid #d4d4d4; }
.l svg { transform: rotate(90deg); }
.r svg { transform: rotate(-90deg); }
.hbar .track { align-items: center; justify-content: center; }
.hbar .track i { width: 17px; height: 5px; }
.grip { width: 17px; height: 17px; background: #f0f0f0; }

/* project browser */
.browser { width: 197px; flex: none; border-left: 2px solid #c0c0c0; background: #fff; display: flex; flex-direction: column; }
.browser .palhead { padding-left: 3px; }
.browser .palhead button { margin-right: -3px; }
.search { margin: 9px 5px 0 10px; height: 25px; border: 1px solid #dedede; display: flex; align-items: center; gap: 8px; padding-left: 8px; flex: none; }
.search input { border: 0; outline: 0; width: 120px; padding: 0; font: inherit; }
.search input::placeholder { color: #a8a8a8; }
.treewrap { flex: 1; min-height: 0; margin: 8px 0 2px 2px; display: flex; }
.tree { flex: 1; min-width: 0; overflow: hidden; color: #5f5f5f; }
.tree, .tree ul { list-style: none; margin: 0; padding: 0; }
.row { height: 20px; line-height: 20px; display: flex; align-items: center; white-space: nowrap; }
.row b { color: #3a3a3a; }
.row.sel { background: #f0f0f0; border: 1px solid #dcdcdc; margin-left: -1px; border-right: 0; }
.root > .row { padding-left: 5px; gap: 5px; }
.root > .row i + svg { margin-left: 3px; }
.root > .row.solo { padding-left: 21px; gap: 4px; }
.root > .row.wide { padding-left: 19px; gap: 3px; }
.tree ul { padding-left: 8px; }
.tree ul ul { padding-left: 16px; }
.tree ul li { position: relative; }
.tree ul li::before { content: ""; position: absolute; left: 0; top: 0; bottom: 0; border-left: 1px dashed #b0b0b0; }
.tree ul li:last-child::before { bottom: auto; height: 11px; }
.tree ul.open > li:last-child::before { height: 20px; }
.tree ul li::after { content: ""; position: absolute; left: 0; top: 10px; width: 9px; border-top: 1px dashed #b0b0b0; }
.tree ul li.leaf::after { width: 25px; }
.tree ul .row { padding-left: 13px; gap: 9px; }
.tree ul .leaf .row { padding-left: 30px; }
.row i { width: 8px; height: 8px; flex: none; background: linear-gradient(#777, #777) 0 3px / 8px 2px no-repeat, linear-gradient(#777, #777) 3px 0 / 2px 8px no-repeat; }
.row i.m { background: linear-gradient(#777, #777) 0 3px / 8px 2px no-repeat; }
.b { width: 14px; }

/* status bar */
.status { height: 24px; flex: none; display: flex; align-items: center; padding-left: 4px; background: #f4f4f4; }
.msg { width: 893px; }
.status > .c { width: 8px; height: 8px; margin-left: 203px; margin-right: 13px; color: #aaa; }
.req { width: 51px; display: flex; color: #8a8a8a; }
.status > button + button { margin-left: 10px; }
.status > .mm { width: 198px; justify-content: space-between; color: #9b9b9b; }
.selopts { margin-left: auto; margin-right: 69px; display: flex; gap: 10px; }
```
